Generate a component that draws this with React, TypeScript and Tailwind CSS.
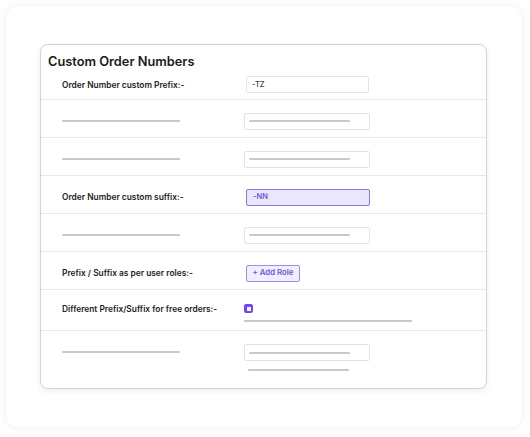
import React from 'react';

const font = { fontFamily: 'Inter, "Noto Sans", sans-serif' };

function Line({ w }: { w: string }) {
  return <div className={`h-[2px] rounded-full bg-[#c9c9c9] ${w}`} />;
}

function Input({ children, lined }: { children?: React.ReactNode; lined?: boolean }) {
  return (
    <div className="flex h-[17px] w-[126px] items-center rounded-[2px] border border-[#e3e3e3] bg-white px-[4px]">
      {lined ? <Line w="w-[101px]" /> : children}
    </div>
  );
}

function Label({ text }: { text: string }) {
  return <div className="text-[8.4px] font-semibold leading-[10px] text-[#222]">{text}</div>;
}

function Row({ label, right, h = 'h-[38px] pt-[5px]' }: { label?: string; right: React.ReactNode; h?: string }) {
  return (
    <div className={`flex items-center border-b border-[#e8e8e8] pl-[21px] ${h}`}>
      <div className="w-[182px] shrink-0">
        {label ? <Label text={label} /> : <Line w="w-[118px]" />}
      </div>
      <div>{right}</div>
    </div>
  );
}

export default function App() {
  return (
    <div className="h-[437px] w-[530px] bg-white p-[6px] leading-none" style={font}>
      <div className="h-[421px] w-[516px] rounded-xl bg-white pl-[34px] pt-[38px] shadow-[0_0_8px_rgba(0,0,0,0.07)]">
        <div className="h-[345px] w-[447px] overflow-hidden rounded-lg border border-[#d4d4d4] bg-white shadow-[0_2px_6px_rgba(0,0,0,0.08)]">
          <h1 className="px-[7px] pt-[9px] text-[12.8px] font-semibold leading-[16px] text-[#1a1a1a]">
            Custom Order Numbers
          </h1>
          <Row
            h="h-[30px]"
            label="Order Number custom Prefix:-"
            right={
              <div className="ml-[2px] flex h-[17px] w-[123px] items-center rounded-[2px] border border-[#e3e3e3] bg-white px-[5px]">
                <span className="text-[7.5px] font-medium leading-none text-[#444]">-TZ</span>
              </div>
            }
          />
          <Row right={<Input lined />} />
          <Row right={<Input lined />} />
          <Row
            label="Order Number custom suffix:-"
            right={
              <div className="ml-[2px] flex h-[17px] w-[124px] items-center rounded-[2px] border border-[#8676f2] bg-[#e9e7fd] px-[6px]">
                <span className="text-[7.5px] font-semibold leading-none text-[#6a58d6]">-NN</span>
              </div>
            }
          />
          <Row right={<Input lined />} />
          <Row
            label="Prefix / Suffix as per user roles:-"
            right={
              <div className="ml-[2px] flex h-[17px] w-[54px] items-center justify-center rounded-[2px] border border-[#9b8cf5] bg-[#f1efff]">
                <span className="text-[7.8px] font-semibold leading-none text-[#6a58d6]">+ Add Role</span>
              </div>
            }
          />
          <div className="flex h-[41px] border-b border-[#e8e8e8] pl-[21px] pt-[14px]">
            <div className="w-[182px] shrink-0">
              <Label text="Different Prefix/Suffix for free orders:-" />
            </div>
            <div className="flex flex-col gap-[7px]">
              <div className="flex h-[9px] w-[9px] items-center justify-center rounded-[2px] bg-[#6c47ff]">
                <div className="h-[4px] w-[4px] bg-white" />
              </div>
              <Line w="w-[168px]" />
            </div>
          </div>
          <div className="flex pl-[21px] pt-[13px]">
            <div className="w-[182px] shrink-0 pt-[7px]">
              <Line w="w-[118px]" />
            </div>
            <div className="flex flex-col gap-[8px]">
              <Input lined />
              <div className="pl-[4px]">
                <Line w="w-[101px]" />
              </div>
            </div>
          </div>
        </div>
      </div>
    </div>
  );
}
